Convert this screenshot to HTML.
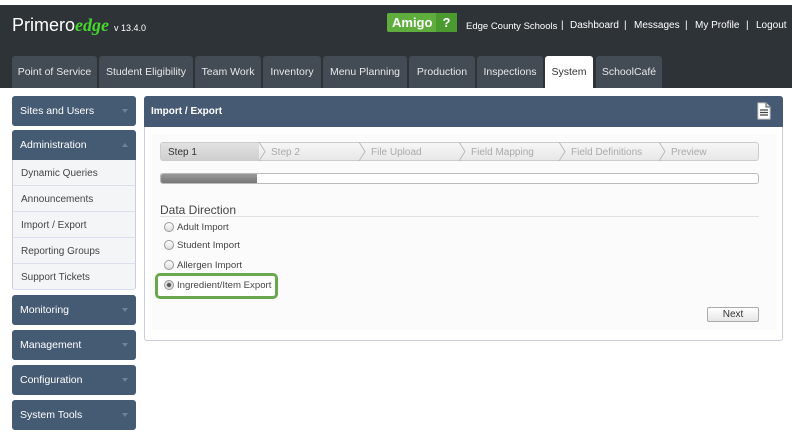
<!DOCTYPE html>
<html><head><style>
*{margin:0;padding:0;box-sizing:border-box}
body{width:792px;height:432px;background:#fff;font-family:"Liberation Sans",sans-serif;position:relative;overflow:hidden;font-size:10px}
.abs{position:absolute}
#hdr{left:0;top:5px;width:792px;height:83px;background:#2e3338}
.tab{position:absolute;top:56px;height:32px;background:#434b54;border-radius:3px 3px 0 0;color:#e8e8e8;font-size:10.5px;line-height:33px;text-align:center}
.tab.on{background:#fff;color:#333}
.lnk{position:absolute;top:20px;color:#fff;font-size:10px;white-space:nowrap}
.sb{position:absolute;left:12px;width:124px;height:30px;background:#455a73;border-radius:3px;color:#fff;font-size:10.5px;line-height:31px;padding-left:8px}
.sb:after{content:"";position:absolute;right:8px;top:13px;border:3px solid transparent;border-top:4px solid #6f8199}
.sb.up:after{top:9px;border-top-color:transparent;border-bottom:4px solid #6f8199}
.it{position:absolute;left:12px;width:124px;height:26px;background:#f4f5f7;border-bottom:1px solid #dde;color:#444;font-size:10px;line-height:28px;padding-left:8px;border-left:1px solid #ccd;border-right:1px solid #ccd}
.step{position:absolute;top:143px;height:19px;line-height:19px;font-size:10px;color:#aaa}
.rad{position:absolute;left:164px;width:10px;height:10px;border-radius:50%;border:1px solid #999;background:linear-gradient(#fff,#ddd)}
.rl{position:absolute;left:177px;font-size:9.6px;color:#444}
</style></head><body>
<div id="hdr" class="abs"></div>
<div class="abs" style="left:12px;top:15px;color:#fff;font-size:18px">Primero<span style="color:#44d62c;font-style:italic;font-weight:bold;font-family:'Liberation Serif',serif">edge</span> <span style="font-size:9px">v 13.4.0</span></div>
<div class="abs" style="left:387px;top:13px;width:70px;height:19px;background:#5fae3d;border-radius:2px;color:#fff;font-size:13px;font-weight:bold;line-height:19px;padding-left:5px">Amigo<span style="position:absolute;left:49px;top:0;width:21px;height:19px;background:#4b9a2f;text-align:center">?</span></div>
<div class="lnk" style="left:466px;font-size:9.5px;top:21px">Edge County Schools</div>
<div class="lnk" style="left:561px">|</div>
<div class="lnk" style="left:570px">Dashboard</div>
<div class="lnk" style="left:624px">|</div>
<div class="lnk" style="left:634px">Messages</div>
<div class="lnk" style="left:685px">|</div>
<div class="lnk" style="left:695px">My Profile</div>
<div class="lnk" style="left:746px">|</div>
<div class="lnk" style="left:756px">Logout</div>
<div class="tab" style="left:12px;width:85px">Point of Service</div>
<div class="tab" style="left:99px;width:94px">Student Eligibility</div>
<div class="tab" style="left:195px;width:66px">Team Work</div>
<div class="tab" style="left:263px;width:58px">Inventory</div>
<div class="tab" style="left:323px;width:84px">Menu Planning</div>
<div class="tab" style="left:409px;width:66px">Production</div>
<div class="tab" style="left:477px;width:66px">Inspections</div>
<div class="tab on" style="left:545px;width:48px">System</div>
<div class="tab" style="left:596px;width:66px">SchoolCafé</div>

<div class="sb" style="top:96px">Sites and Users</div>
<div class="sb up" style="top:130px;border-radius:3px 3px 0 0">Administration</div>
<div class="it" style="top:160px">Dynamic Queries</div>
<div class="it" style="top:186px">Announcements</div>
<div class="it" style="top:212px">Import / Export</div>
<div class="it" style="top:238px">Reporting Groups</div>
<div class="it" style="top:264px;border-radius:0 0 3px 3px">Support Tickets</div>
<div class="sb" style="top:295px">Monitoring</div>
<div class="sb" style="top:330px">Management</div>
<div class="sb" style="top:365px">Configuration</div>
<div class="sb" style="top:400px">System Tools</div>

<div class="abs" style="left:144px;top:96px;width:639px;height:245px;border:1px solid #ccd;border-radius:3px;background:#fff"></div>
<div class="abs" style="left:144px;top:96px;width:639px;height:31px;background:#465a73;border-radius:3px 3px 0 0;color:#fff;font-weight:bold;font-size:10px;line-height:31px;padding-left:7px">Import / Export</div>
<svg class="abs" style="left:757px;top:102px" width="14" height="18" viewBox="0 0 14 18"><path d="M1 1h8l4 4v12H1z" fill="#fff" stroke="#ccc"/><path d="M9 1v4h4" fill="#ddd" stroke="#555"/><path d="M3 8h8M3 10.5h8M3 13h8" stroke="#444" stroke-width="1.3"/></svg>
<div class="abs" style="left:152px;top:134px;width:624px;height:196px;background:#fbfbfb"></div>
<div class="abs" style="left:160px;top:142px;width:599px;height:19px;border:1px solid #ccc;border-radius:3px;background:linear-gradient(#f6f6f6,#e8e8e8)"></div>
<div class="abs" style="left:161px;top:143px;width:98px;height:17px;background:linear-gradient(#e2e2e2,#cfcfcf)"></div>
<svg class="abs" style="left:160px;top:142px" width="600" height="19"><g fill="none" stroke="#bbb"><path d="M99 0l6 9.5-6 9.5M199 0l6 9.5-6 9.5M299 0l6 9.5-6 9.5M399 0l6 9.5-6 9.5M499 0l6 9.5-6 9.5"/></g></svg>
<div class="step" style="left:168px;color:#333">Step 1</div>
<div class="step" style="left:271px">Step 2</div>
<div class="step" style="left:371px">File Upload</div>
<div class="step" style="left:471px">Field Mapping</div>
<div class="step" style="left:571px">Field Definitions</div>
<div class="step" style="left:671px">Preview</div>
<div class="abs" style="left:160px;top:173px;width:599px;height:11px;border:1px solid #bbb;border-radius:3px;background:#fff;overflow:hidden"><div style="width:96px;height:100%;background:linear-gradient(#999,#777)"></div></div>
<div class="abs" style="left:160px;top:203px;font-size:12px;color:#444">Data Direction</div>
<div class="abs" style="left:160px;top:216px;width:599px;height:1px;background:#e2e2e2"></div>
<div class="rad" style="top:222px"></div><div class="rl" style="top:222px">Adult Import</div>
<div class="rad" style="top:240px"></div><div class="rl" style="top:240px">Student Import</div>
<div class="rad" style="top:260px"></div><div class="rl" style="top:260px">Allergen Import</div>
<div class="abs" style="left:155px;top:273px;width:123px;height:26px;border:3px solid #6aa84f;border-radius:5px;background:#fff"></div>
<div class="rad" style="top:280px;background:radial-gradient(#555 30%,#ddd 45%)"></div><div class="rl" style="top:280px">Ingredient/Item Export</div>
<div class="abs" style="left:707px;top:307px;width:52px;height:15px;border:1px solid #aaa;border-radius:2px;background:linear-gradient(#fff,#e6e6e6);text-align:center;line-height:14px;font-size:10px;color:#333">Next</div>
</body></html>
